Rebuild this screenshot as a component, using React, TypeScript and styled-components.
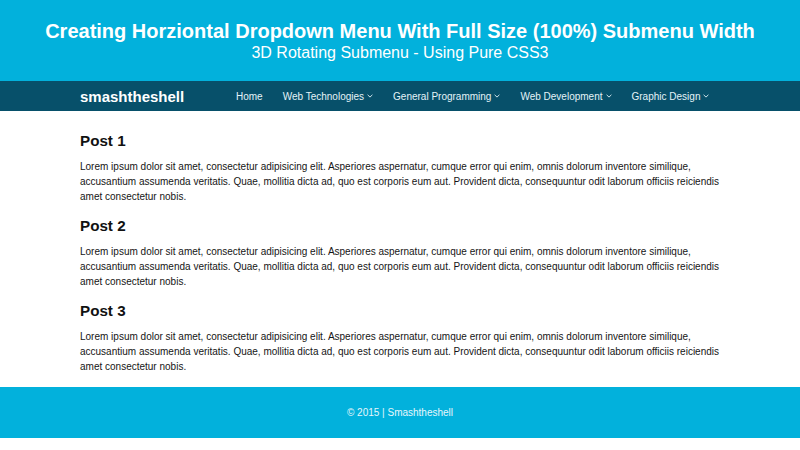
import React from "react";
import styled, { createGlobalStyle } from "styled-components";

const Global = createGlobalStyle`
  html, body { margin: 0; padding: 0; background: #ffffff; }
  body { font-family: "Liberation Sans", Arial, sans-serif; color: #111; }
  * { box-sizing: border-box; }
`;

const Header = styled.header`
  background: #02b1dc;
  height: 81px;
  display: flex;
  flex-direction: column;
  align-items: center;
  padding-top: 20px;
  color: #fff;
`;

const Title = styled.h1`
  margin: 0;
  font-size: 20px;
  line-height: 23px;
  font-weight: 700;
`;

const Subtitle = styled.h2`
  margin: 0;
  font-size: 16px;
  line-height: 19px;
  font-weight: 400;
`;

const NavBar = styled.nav`
  background: #07506a;
  height: 30px;
`;

const Container = styled.div`
  width: 640px;
  margin: 0 auto;
`;

const NavInner = styled(Container)`
  display: flex;
  align-items: center;
  height: 100%;
`;

const Logo = styled.div`
  font-size: 15px;
  font-weight: 700;
  color: #fff;
  width: 146px;
  flex-shrink: 0;
  white-space: nowrap;
`;

const Menu = styled.ul`
  list-style: none;
  margin: 0;
  padding: 0;
  display: flex;
  align-items: center;
`;

const MenuItem = styled.li`
  font-size: 10px;
  color: #e4f3f8;
  padding: 0 10px;
  display: flex;
  align-items: center;
  gap: 3px;
  white-space: nowrap;
`;

const Chevron = () => (
  <svg width="6" height="4" viewBox="0 0 6 4">
    <path d="M0.6 0.8 L3 3.1 L5.4 0.8" fill="none" stroke="#e4f3f8" strokeWidth="0.9" />
  </svg>
);

const Main = styled(Container)`
  padding-top: 20px;
  padding-bottom: 1px;
`;

const Post = styled.article``;

const PostTitle = styled.h3`
  margin: 0 0 9px;
  font-size: 15.2px;
  line-height: 19px;
  font-weight: 700;
  color: #111;
`;

const PostText = styled.p`
  margin: 0 0 12px;
  font-size: 10px;
  line-height: 15px;
  color: #151515;
`;

const Footer = styled.footer`
  background: #02b1dc;
  height: 51px;
  margin-bottom: 12px;
  display: flex;
  align-items: center;
  justify-content: center;
  font-size: 10px;
  color: #e6f6fb;
`;

const lorem =
  "Lorem ipsum dolor sit amet, consectetur adipisicing elit. Asperiores aspernatur, cumque error qui enim, omnis dolorum inventore similique, accusantium assumenda veritatis. Quae, mollitia dicta ad, quo est corporis eum aut. Provident dicta, consequuntur odit laborum officiis reiciendis amet consectetur nobis.";

const menu = [
  { label: "Home", sub: false },
  { label: "Web Technologies", sub: true },
  { label: "General Programming", sub: true },
  { label: "Web Development", sub: true },
  { label: "Graphic Design", sub: true },
];

export default function App() {
  return (
    <>
      <Global />
      <Header>
        <Title>Creating Horziontal Dropdown Menu With Full Size (100%) Submenu Width</Title>
        <Subtitle>3D Rotating Submenu - Using Pure CSS3</Subtitle>
      </Header>
      <NavBar>
        <NavInner>
          <Logo>smashtheshell</Logo>
          <Menu>
            {menu.map((m) => (
              <MenuItem key={m.label}>
                {m.label}
                {m.sub && <Chevron />}
              </MenuItem>
            ))}
          </Menu>
        </NavInner>
      </NavBar>
      <Main>
        {[1, 2, 3].map((n) => (
          <Post key={n}>
            <PostTitle>Post {n}</PostTitle>
            <PostText>{lorem}</PostText>
          </Post>
        ))}
      </Main>
      <Footer>© 2015 | Smashtheshell</Footer>
    </>
  );
}
